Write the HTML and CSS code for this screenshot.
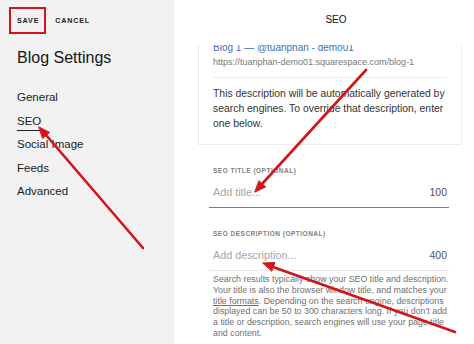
FILE: index.html
```html
<!DOCTYPE html>
<html lang="en">
<head>
    <meta charset="UTF-8">
    <meta name="viewport" content="width=device-width, initial-scale=1.0">
    <title>Blog Settings - SEO</title>
    <link rel="stylesheet" href="styles.css">
</head>
<body>
    <div class="page">
        <aside class="sidebar">
            <div class="actions">
                <button class="action save">Save</button>
                <button class="action">Cancel</button>
            </div>
            <h1 class="sidebar-title">Blog Settings</h1>
            <nav class="nav">
                <a class="nav-item">General</a>
                <a class="nav-item active"><span>SEO</span></a>
                <a class="nav-item">Social Image</a>
                <a class="nav-item">Feeds</a>
                <a class="nav-item">Advanced</a>
            </nav>
        </aside>

        <main class="panel">
            <header class="panel-header">SEO</header>
            <div class="panel-scroll">
                <div class="preview">
                    <p class="preview-title">Blog 1 — @tuanphan - demo01</p>
                    <p class="preview-url">https://tuanphan-demo01.squarespace.com/blog-1</p>
                    <p class="preview-note">This description will be automatically generated by search engines. To override that description, enter one below.</p>
                </div>

                <div class="field">
                    <label class="field-label" for="seoTitle">SEO Title (Optional)</label>
                    <div class="field-input strong">
                        <input type="text" id="seoTitle" placeholder="Add title...">
                        <span class="count">100</span>
                    </div>
                </div>

                <div class="field">
                    <label class="field-label" for="seoDesc">SEO Description (Optional)</label>
                    <div class="field-input">
                        <input type="text" id="seoDesc" placeholder="Add description...">
                        <span class="count">400</span>
                    </div>
                    <p class="help">Search results typically show your SEO title and description. Your title is also the browser window title, and matches your <a class="link">title formats</a>. Depending on the search engine, descriptions displayed can be 50 to 300 characters long. If you don’t add a title or description, search engines will use your page title and content.</p>
                </div>
            </div>
        </main>

        <!-- annotation arrows drawn over the screenshot -->
        <svg class="arrows" width="474" height="344" viewBox="0 0 474 344">
            <g stroke="#d3141b" stroke-width="2.6" stroke-linecap="round" fill="#d3141b">
                <line x1="143" y1="248" x2="46" y2="135"/>
                <polygon points="39,127 49.6,132.4 42.8,138.3" stroke-width="1"/>
                <line x1="366" y1="70" x2="262" y2="184"/>
                <polygon points="255,192 265.7,186.9 259.1,180.9" stroke-width="1"/>
                <line x1="455" y1="332" x2="273" y2="267"/>
                <polygon points="263,263 274.9,262.5 271.9,270.9" stroke-width="1"/>
            </g>
        </svg>
    </div>
</body>
</html>
```

FILE: styles.css
```css
* {
    box-sizing: border-box;
}

body {
    margin: 0;
    font-family: "Liberation Sans", Arial, sans-serif;
    color: #1f1f1f;
    background-color: #fff;
}

.page {
    position: relative;
    display: flex;
    width: 474px;
    height: 344px;
    overflow: hidden;
}

/* left column */
.sidebar {
    width: 174px;
    flex-shrink: 0;
    background-color: #f2f2f2;
    padding-left: 17px;
}

.actions {
    display: flex;
    align-items: center;
    gap: 9px;
    height: 40px;
    margin-left: -8px;
}

.action {
    font-family: inherit;
    font-size: 7.2px;
    font-weight: 700;
    letter-spacing: 0.8px;
    text-transform: uppercase;
    color: #222;
    background: none;
    border: none;
    padding: 0;
}

.save {
    border: 2px solid #d3141b;
    padding: 7px 5px 7px 6px;
}

.sidebar-title {
    margin: 7px 0 0;
    font-size: 16px;
    font-weight: 400;
    line-height: 22px;
    color: #161616;
}

.nav {
    display: flex;
    flex-direction: column;
    margin-top: 17px;
}

.nav-item {
    font-size: 11.5px;
    line-height: 23.5px;
    color: #1a1a1a;
}

.nav-item.active span {
    display: inline-block;
    line-height: 14px;
    padding-bottom: 2px;
    border-bottom: 1px solid #222;
}

/* right column */
.panel {
    flex: 1;
    display: flex;
    flex-direction: column;
    min-width: 0;
}

.panel-header {
    position: relative;
    z-index: 1;
    height: 45px;
    flex-shrink: 0;
    background-color: #fff;
    padding: 14px 0 0 24px;
    text-align: center;
    font-size: 10px;
    color: #111;
}

.panel-scroll {
    flex: 1;
    padding: 0 12px 0 24px;
}

.preview {
    margin-top: -18px;
    border: 1px solid #ececec;
    padding: 12px 14px 13px;
    font-size: 10.4px;
    line-height: 15px;
}

.preview p {
    margin: 0;
}

.preview-title {
    font-size: 10px;
    color: #3d6fc0;
}

.preview-url {
    color: #777;
    font-size: 9px;
    padding-bottom: 7px;
    border-bottom: 1px solid #ececec;
}

.preview-note {
    padding-top: 8px;
    color: #333;
}

.field {
    margin: 21px 13px 0 11px;
}

.field-label {
    display: block;
    padding-left: 4px;
    font-size: 6.5px;
    font-weight: 700;
    letter-spacing: 0.5px;
    line-height: 10px;
    text-transform: uppercase;
    color: #808080;
}

.field-input {
    display: flex;
    align-items: center;
    margin-top: 8px;
    padding: 0 2px 7px 4px;
    border-bottom: 1px solid #e6e6e6;
}

.field-input.strong {
    border-bottom: 1.5px solid #7a7a7a;
}

.field-input input {
    flex: 1;
    min-width: 0;
    border: none;
    padding: 0;
    outline: none;
    font-family: inherit;
    font-size: 10.8px;
    line-height: 16px;
    height: 16px;
    color: #222;
}

.field-input input::placeholder {
    color: #a5a5a5;
}

.count {
    font-size: 10.5px;
    color: #555;
}

.help {
    margin: 3px -4px 0 0;
    padding-left: 4px;
    font-size: 8.85px;
    line-height: 10.8px;
    color: #707070;
}

.link {
    text-decoration: underline;
}

.arrows {
    position: absolute;
    top: 0;
    left: 0;
    pointer-events: none;
}
```
